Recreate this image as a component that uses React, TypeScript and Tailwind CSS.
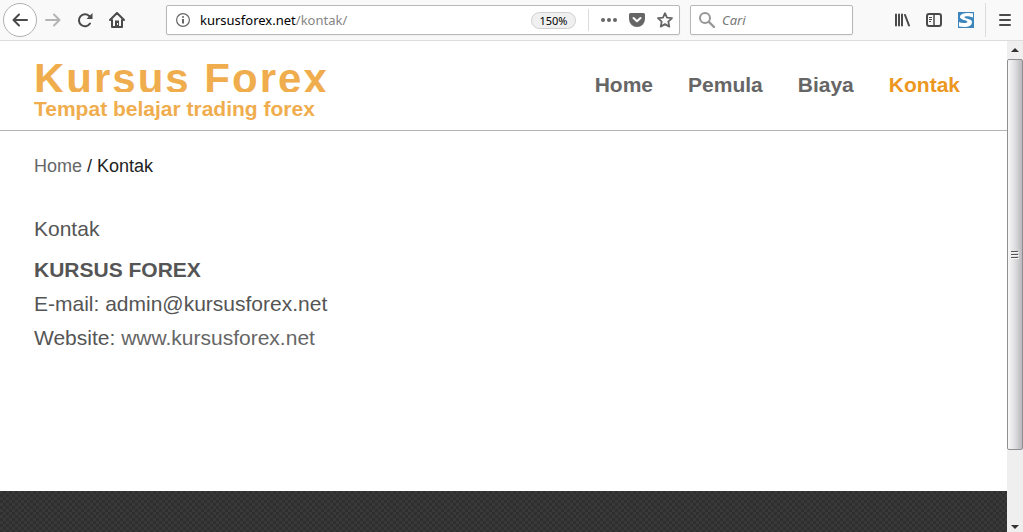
import { useState } from 'react';
import type { ReactNode } from 'react';

const menu = [
  { label: 'Home', href: '#home' },
  { label: 'Pemula', href: '#pemula' },
  { label: 'Biaya', href: '#biaya' },
  { label: 'Kontak', href: '#kontak', active: true },
];

function ToolButton({ label, children }: { label: string; children: ReactNode }) {
  return (
    <button aria-label={label} className="flex h-8 w-8 shrink-0 items-center justify-center">
      {children}
    </button>
  );
}

function Toolbar() {
  const [url, setUrl] = useState('kontak/');

  return (
    <header className="flex h-[41px] shrink-0 items-center border-b border-[#dcdcdc] bg-[#f9f9fa] font-['Noto_Sans','Open_Sans',sans-serif] text-[13px] text-[#4a4a4b]">
      <button aria-label="Back" className="ml-[3px] flex h-[34px] w-[34px] shrink-0 items-center justify-center rounded-full border border-[#b1b1b1] bg-white">
        <svg width="16" height="16" viewBox="0 0 16 16" fill="none" stroke="#4a4a4b" strokeWidth="2" strokeLinecap="round" strokeLinejoin="round">
          <path d="M15 8H1.500M7 2.500 1.500 8 7 13.500" />
        </svg>
      </button>
      <ToolButton label="Forward">
        <svg width="16" height="16" viewBox="0 0 16 16" fill="none" stroke="#b4b4b5" strokeWidth="2" strokeLinecap="round" strokeLinejoin="round">
          <path d="M1 8h13.500M9 2.500l5.500 5.500L9 13.500" />
        </svg>
      </ToolButton>
      <ToolButton label="Reload">
        <svg width="16" height="16" viewBox="0 0 16 16" fill="none" stroke="#4a4a4b" strokeWidth="2" strokeLinecap="round">
          <path d="M13 11.500A6 6 0 1 1 12.200 4" />
          <path d="M15.500 1v6h-6z" fill="#4a4a4b" stroke="none" />
        </svg>
      </ToolButton>
      <ToolButton label="Home page">
        <svg width="16" height="16" viewBox="0 0 16 16" fill="none" stroke="#4a4a4b" strokeWidth="2" strokeLinecap="round" strokeLinejoin="round">
          <path d="M1 8l7-7 7 7M3 8v7h10V8" />
          <path d="M6 15V8.500h4V15z" fill="#4a4a4b" stroke="none" />
          <path d="M8.500 11.500v1" stroke="#fff" strokeWidth="1" />
        </svg>
      </ToolButton>

      <div className="ml-[33px] flex h-[30px] min-w-0 flex-1 items-center rounded-xs border border-[#b8b8b8] bg-white shadow-xs">
        <svg className="ml-[9px] mr-[10px] shrink-0" width="14" height="14" viewBox="0 0 14 14" fill="none" stroke="#666">
          <circle cx="7" cy="7" r="6.400" strokeWidth="1.200" />
          <path d="M7 6v4.500M7 3.200v1.600" strokeWidth="2" />
        </svg>
        <div className="flex min-w-0 flex-1 pt-0.5">
          <label htmlFor="url" className="text-black">kursusforex.net<span className="text-[#858585]">/</span></label>
          <input
            id="url"
            value={url}
            onChange={(e) => setUrl(e.target.value)}
            className="min-w-0 flex-1 text-[#858585] outline-none"
          />
        </div>
        <button className="h-[17px] w-[45px] shrink-0 rounded-full border border-[#cfcfcf] bg-[#f0f0f0] text-[11px] leading-[15px] text-black">150%</button>
        <span className="ml-3 h-[22px] w-px shrink-0 bg-[#dcdcdc]" />
        <div className="ml-3 mr-[6px] flex shrink-0 items-center gap-3">
          <button aria-label="Page actions">
            <svg width="16" height="16" viewBox="0 0 16 16" fill="#666">
              <circle cx="2" cy="8" r="2" />
              <circle cx="8" cy="8" r="2" />
              <circle cx="14" cy="8" r="2" />
            </svg>
          </button>
          <button aria-label="Save to Pocket">
            <svg width="16" height="16" viewBox="0 0 16 16">
              <path d="M1.600 1h12.800A1.600 1.600 0 0 1 16 2.600V7a8 8 0 0 1-16 0V2.600A1.600 1.600 0 0 1 1.600 1z" fill="#666" />
              <path d="M4.500 6 8 9.300 11.500 6" fill="none" stroke="#fff" strokeWidth="2" strokeLinecap="round" strokeLinejoin="round" />
            </svg>
          </button>
          <button aria-label="Bookmark this page">
            <svg width="16" height="16" viewBox="0 0 16 16" fill="none" stroke="#666" strokeWidth="1.800" strokeLinejoin="round">
              <path d="M8 1.200l2 4.500 5 .5-3.700 3.400 1 5L8 12.100l-4.300 2.500 1-5L1 6.200l5-.5z" />
            </svg>
          </button>
        </div>
      </div>

      <div className="ml-[10px] flex h-[30px] w-[163px] shrink-0 items-center rounded-xs border border-[#b8b8b8] bg-white shadow-xs">
        <svg className="ml-2 mr-[7px] shrink-0" width="16" height="16" viewBox="0 0 16 16" fill="none" stroke="#969696" strokeWidth="2" strokeLinecap="round">
          <circle cx="6" cy="6" r="5" />
          <path d="M10 10l5 5" strokeWidth="2.400" />
        </svg>
        <input aria-label="Cari" placeholder="Cari" className="min-w-0 flex-1 pt-0.5 italic outline-none placeholder:text-[#777]" />
      </div>

      <div className="ml-[33px] flex shrink-0 items-center">
        <ToolButton label="Library">
          <svg width="16" height="16" viewBox="0 0 16 16" fill="none" stroke="#4a4a4b" strokeWidth="2" strokeLinecap="round">
            <path d="M2 2.500v11M5 2.500v11M8 2.500v11M11 3l4 10.500" />
          </svg>
        </ToolButton>
        <ToolButton label="Sidebars">
          <svg width="16" height="16" viewBox="0 0 16 16" fill="none" stroke="#4a4a4b">
            <rect x="1" y="2" width="14" height="12" rx="2" strokeWidth="2" />
            <path d="M8 2v12" strokeWidth="1.500" />
            <path d="M3 5.500h3M3 7.500h3M3 9.500h2" />
          </svg>
        </ToolButton>
        <ToolButton label="Snapshot">
          <svg width="16" height="16" viewBox="0 0 16 16" fill="none">
            <rect width="16" height="16" fill="#3d86bd" />
            <path d="M15 1.500C11 .5 2 .5 2 5c0 3.200 7.500 3 7.500 4.700S4 11.500 1 10v4.500c5 1 13 1 13-4.500 0-3.500-7.500-3-7.500-4.700S11 4 15 5.500z" fill="#fff" />
          </svg>
        </ToolButton>
      </div>
      <span className="ml-[3px] h-[34px] w-px shrink-0 bg-[#dcdcdc]" />
      <button aria-label="Open menu" className="flex h-8 w-[37px] shrink-0 items-center justify-center">
        <svg width="12" height="12" viewBox="0 0 12 12" stroke="#4a4a4b" strokeWidth="2" strokeLinecap="round">
          <path d="M1 1h10M1 6h10M1 11h10" />
        </svg>
      </button>
    </header>
  );
}

function Scrollbar() {
  return (
    <div className="flex w-4 shrink-0 flex-col bg-[#efefef]">
      <button aria-label="Scroll up" className="flex h-[18px] items-center justify-center">
        <svg width="8" height="4" viewBox="0 0 8 4" fill="#333">
          <path d="M4 0l4 4H0z" />
        </svg>
      </button>
      <div className="flex grow-[380] items-center justify-center rounded-xs border border-[#8e8e93] bg-linear-to-r from-[#f8f8f8] via-[#dedee0] to-[#b9b9bd]">
        <svg width="8" height="9" viewBox="0 0 8 9" stroke="#555">
          <path d="M0 1.500h7M0 4.500h7M0 7.500h7" />
          <path d="M1 2.500h7M1 5.500h7M1 8.500h7" stroke="#f5f5f5" />
        </svg>
      </div>
      <div className="grow-[72]" />
      <button aria-label="Scroll down" className="flex h-[10px] items-center justify-center">
        <svg width="8" height="4" viewBox="0 0 8 4" fill="#333">
          <path d="M0 0h8L4 4z" />
        </svg>
      </button>
    </div>
  );
}

export default function App() {
  return (
    <div className="flex min-h-screen flex-col bg-white font-['Liberation_Sans',Arial,sans-serif]">
      <Toolbar />
      <div className="flex flex-1">
        <div className="flex min-w-0 flex-1 flex-col">
          <div className="flex items-start justify-between border-b border-[#b5b5b5] pt-4 pr-[47px] pb-[5px] pl-[34px]">
            <div className="text-[#f0ad4e]">
              <h1 className="h-[35px] overflow-hidden text-[42px] leading-[44px] font-bold tracking-[2px]">Kursus Forex</h1>
              <p className="text-[21px] leading-[33px] font-bold">Tempat belajar trading forex</p>
            </div>
            <nav className="flex gap-[35px] pt-3 text-[21px] leading-8 font-bold">
              {menu.map((item) => (
                <a key={item.label} href={item.href} className={item.active ? 'text-[#ec971f]' : 'text-[#666]'}>
                  {item.label}
                </a>
              ))}
            </nav>
          </div>

          <main className="flex-1 px-[34px] pt-5 text-[21px] leading-[34px] text-[#555]">
            <div className="text-lg leading-[30px] text-[#222]">
              <a href="#home" className="text-[#666]">Home</a> / Kontak
            </div>
            <h2 className="mt-[31px] mb-[7px]">Kontak</h2>
            <p className="font-bold">KURSUS FOREX</p>
            <p>E-mail: admin@kursusforex.net</p>
            <p>
              Website: <a href="#website" className="text-[#666]">www.kursusforex.net</a>
            </p>
          </main>

          <footer className="h-[41px] bg-[#333] bg-[repeating-conic-gradient(#2f2f2f_0_25%,#393939_0_50%)] bg-size-[6px_6px]" />
        </div>
        <Scrollbar />
      </div>
    </div>
  );
}
